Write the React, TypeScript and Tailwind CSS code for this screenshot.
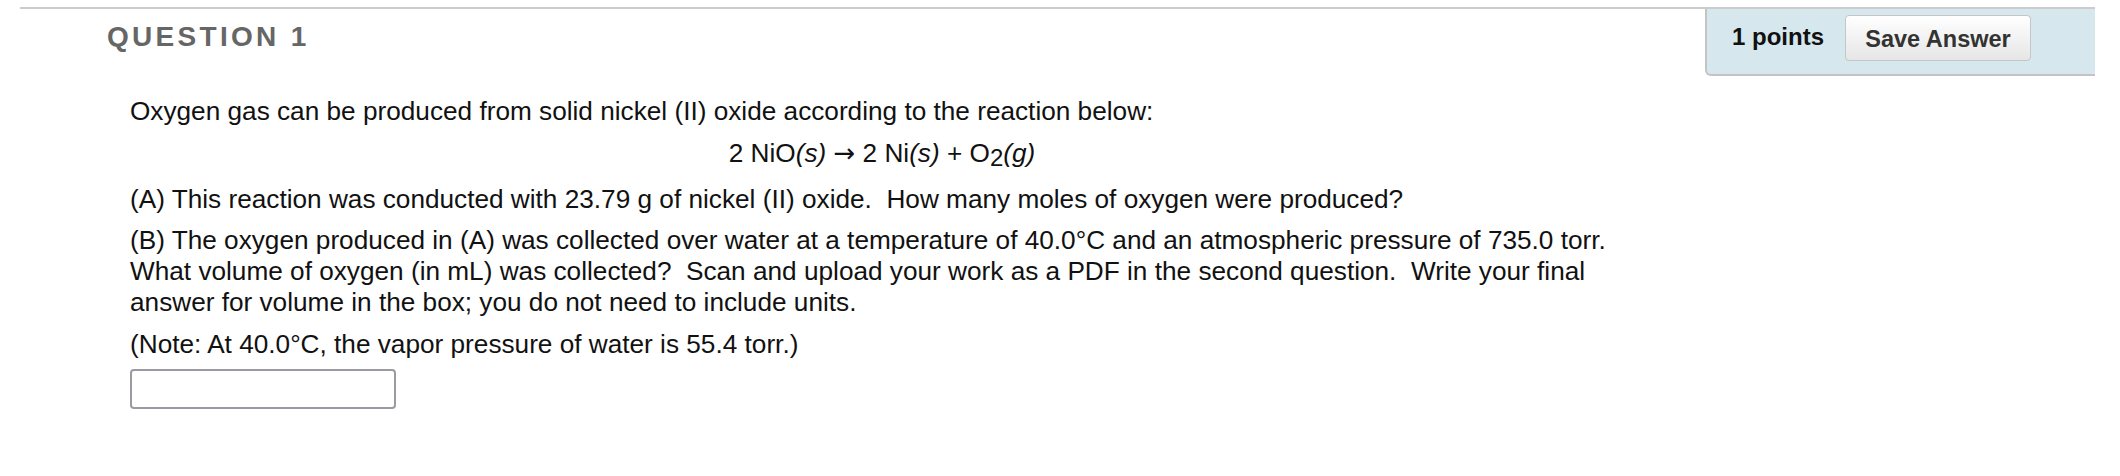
export default function App() {
  return (
    <div className="w-full h-[476px] bg-white font-['Liberation_Sans',Arial,sans-serif] text-[#111]">
      {/* header strip */}
      <div className="pt-[7px] pl-[20px] pr-[25px]">
        <div className="border-t-2 border-[#cccccc] flex justify-between items-start">
          <h2 className="ml-[87px] mt-[12px] text-[28px] leading-[31px] font-bold tracking-[3.3px] text-[#666666]">
            QUESTION 1
          </h2>
          <div className="w-[390px] h-[67px] bg-[#d6e8ee] border-l-2 border-b-2 border-[#c4c4c4] rounded-bl-[6px] flex items-start pl-[25px] pt-[6px] gap-[21px]">
            <span className="mt-[8px] text-[24px] leading-[28px] font-bold text-[#111]">1 points</span>
            <button className="w-[186px] h-[46px] pt-[3px] rounded-[4px] border border-[#c6c6c6] bg-gradient-to-b from-white to-[#e6e6e6] text-[23.5px] font-bold text-[#333]">
              Save Answer
            </button>
          </div>
        </div>
      </div>

      {/* question body */}
      <div className="ml-[130px] w-[1504px] mt-[20px] text-[26.2px] leading-[30px]">
        <p>Oxygen gas can be produced from solid nickel (II) oxide according to the reaction below:</p>
        <p className="mt-[12px] text-center">
          2 NiO<i>(s)</i> <span className="font-['DejaVu_Sans',sans-serif] text-[26px] leading-[30px]">→</span> 2 Ni<i>(s)</i> + O
          <sub className="text-[24px] relative top-[4px] align-baseline">2</sub>
          <i>(g)</i>
        </p>
        <p className="mt-[16px]">
          (A) This reaction was conducted with 23.79 g of nickel (II) oxide.&nbsp; How many moles of oxygen were produced?
        </p>
        <p className="mt-[11px] leading-[31px]">
          (B) The oxygen produced in (A) was collected over water at a temperature of 40.0°C and an atmospheric pressure of 735.0 torr.
          <br />
          What volume of oxygen (in mL) was collected?&nbsp; Scan and upload your work as a PDF in the second question.&nbsp; Write your final
          <br />
          answer for volume in the box; you do not need to include units.
        </p>
        <p className="mt-[11px]">(Note: At 40.0°C, the vapor pressure of water is 55.4 torr.)</p>
        <input
          type="text"
          className="mt-[10px] block w-[266px] h-[40px] border-2 border-[#9a9aa3] rounded-[4px] bg-white"
        />
      </div>
    </div>
  )
}
